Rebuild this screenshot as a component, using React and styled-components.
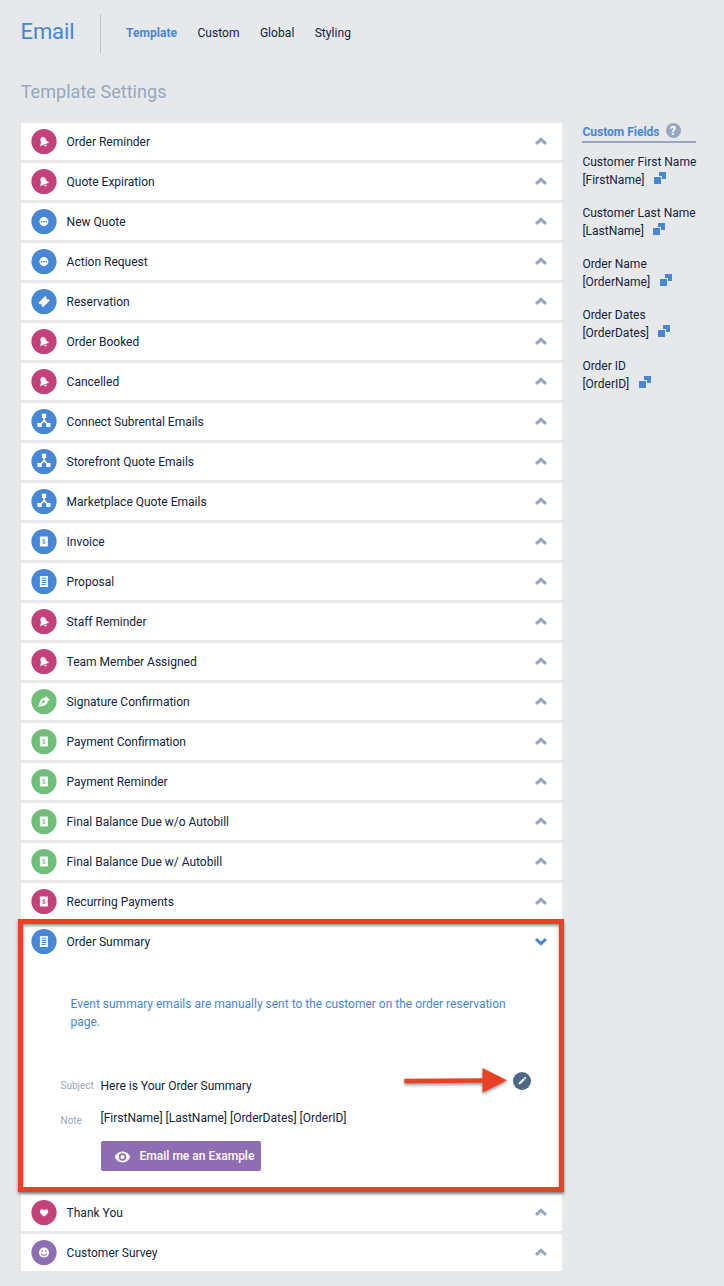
import React from 'react';
import styled, { createGlobalStyle, ThemeProvider } from 'styled-components';

const theme = {
    colors: {
        page: '#e6e8e9',
        text: '#10243e',
        muted: '#94a9c0',
        blue: '#4687d6',
        pink: '#c4417c',
        green: '#6fbf78',
        purple: '#8f6db3',
        slate: '#4c6886',
        marker: '#ea4025'
    }
};

const GlobalStyle = createGlobalStyle`
    * {
        box-sizing: border-box;
    }
    body {
        background: ${theme.colors.page};
        color: ${theme.colors.text};
        font-family: Roboto, 'Liberation Sans', sans-serif;
        font-size: 12px;
        line-height: 18px;
        margin: 0;
    }
    h1, h2, h3, p, ul {
        font-weight: 400;
        margin: 0;
        padding: 0;
    }
    svg {
        display: block;
    }
`;

const Page = styled.div`
    height: 1286px;
    overflow: hidden;
    padding: 14px 0 0 21px;
    width: 724px;
`;

const Header = styled.header`
    display: flex;
    height: 39px;
`;

const Title = styled.h1`
    border-right: 1px solid #b7c4d2;
    color: ${(props) => props.theme.colors.blue};
    font-size: 22px;
    letter-spacing: -0.1px;
    line-height: 36px;
    text-indent: -0.5px;
    width: 80px;
`;

const Nav = styled.nav`
    display: flex;
    gap: 20.3px;
    line-height: 38px;
    margin-left: 25px;
`;

const NavLink = styled.a`
    color: ${(props) =>
        props.$active ? props.theme.colors.blue : props.theme.colors.text};
    font-weight: ${(props) => (props.$active ? 700 : 400)};
    letter-spacing: 0.06px;
`;

const SectionTitle = styled.h2`
    color: ${(props) => props.theme.colors.muted};
    font-size: 18px;
    letter-spacing: 0.04px;
    line-height: 24px;
    margin: 27px 0 19px 0;
    text-indent: -0.3px;
`;

const Columns = styled.div`
    align-items: flex-start;
    display: flex;
    gap: 20.4px;
`;

const List = styled.div`
    display: flex;
    flex-direction: column;
    gap: 3px;
    width: 541px;
`;

const Panel = styled.section`
    background: #fff;
    height: ${(props) => (props.$open ? '268px' : '37px')};
    position: relative;
`;

const PanelHead = styled.div`
    align-items: center;
    display: flex;
    height: 37px;
    padding: 0 14px 0 10px;
`;

const Badge = styled.svg`
    height: 25px;
    margin-right: 9.6px;
    overflow: visible;
    width: 26px;
`;

const PanelName = styled.h3`
    flex: 1;
    font-size: 12px;
`;

const PanelBody = styled.div`
    padding: 35px 30.6px 0 39.5px;
`;

const Description = styled.p`
    color: ${(props) => props.theme.colors.blue};
    margin: 0 0 41px 10px;
    width: 450px;
`;

const Detail = styled.div`
    align-items: flex-start;
    display: flex;
    height: 32px;
    padding-top: 5px;
`;

const DetailLabel = styled.span`
    color: ${(props) => props.theme.colors.muted};
    font-size: 10px;
    padding-top: ${(props) => props.$drop || 0}px;
    width: 40px;
`;

const DetailValue = styled.span`
    flex: 1;
`;

const EditButton = styled.button`
    align-items: center;
    background: ${(props) => props.theme.colors.slate};
    border: 0;
    border-radius: 50%;
    display: flex;
    height: 18px;
    justify-content: center;
    margin-top: -5px;
    padding: 0;
    width: 18px;
`;

const ExampleButton = styled.button`
    align-items: center;
    background: ${(props) => props.theme.colors.purple};
    border: 0;
    border-radius: 2px;
    color: #fff;
    display: flex;
    font: 500 12px/30px Roboto, sans-serif;
    gap: 9px;
    height: 30px;
    margin: 5px 0 0 40.5px;
    padding: 0 0 0 12.6px;
    width: 160px;

    svg {
        margin-top: 2px;
    }
`;

// The highlight lies over the open panel and the edges of its neighbours
const Highlight = styled.div`
    border: 5px solid ${(props) => props.theme.colors.marker};
    box-shadow: 0 2px 3px rgba(0, 0, 0, 0.45),
        inset 0 2px 3px rgba(0, 0, 0, 0.4);
    height: 273px;
    left: -3px;
    pointer-events: none;
    position: absolute;
    top: -4px;
    width: 546px;
    z-index: 1;
`;

const Pointer = styled.svg`
    filter: drop-shadow(0 2px 1.5px rgba(0, 0, 0, 0.4));
    left: 383px;
    overflow: visible;
    position: absolute;
    top: 144px;
`;

const Aside = styled.aside`
    width: 114px;
`;

const AsideTitle = styled.h3`
    align-items: center;
    border-bottom: 2px solid ${(props) => props.theme.colors.muted};
    color: ${(props) => props.theme.colors.blue};
    display: flex;
    font-size: 12px;
    font-weight: 700;
    gap: 6px;
    height: 20px;
    margin-bottom: 10px;
`;

const Help = styled.span`
    background: ${(props) => props.theme.colors.muted};
    border-radius: 50%;
    color: #fff;
    font-size: 12px;
    height: 15px;
    line-height: 16px;
    margin-top: -3px;
    text-align: center;
    width: 15px;
`;

const Field = styled.div`
    margin-bottom: 15px;
    white-space: nowrap;
`;

const FieldTag = styled.div`
    display: flex;
    gap: 9.4px;
`;

const glyphs = {
    bell: (
        <>
            <path
                fill="#fff"
                d="M10.100 8.500q.2-.9 1.100-.5c1.500-.3 2.800.7 3.300 2.200.5 1.500 1.100 2.200 2.900 2.900q.4.4 0 .7l-7.900 3.100q-.6 0-.6-.6c.8-1.700.9-2.800.4-4.300-.5-1.400-.2-2.700.8-3.500Z"
            />
            <path fill="#fff" d="m12.900 16.500 2.200-.9c.5.9.2 1.700-.5 1.900-.7.3-1.400 0-1.700-1Z" />
        </>
    ),
    dots: (tone) => (
        <>
            <circle cx="12.6" cy="12.6" r="4.5" fill="#fff" />
            <g fill={tone}>
                <circle cx="10.2" cy="12.6" r="0.85" />
                <circle cx="12.6" cy="12.6" r="0.85" />
                <circle cx="15" cy="12.6" r="0.85" />
            </g>
        </>
    ),
    ticket: (
        <path
            fill="#fff"
            d="m7.200 13.700 6.700-6.800 1.400 1.400a.9.9 0 0 0 1.700 1.600l1.500 1.500-6.700 6.800-1.700-1.700a.9.9 0 0 0-1.300-1.300Z"
        />
    ),
    network: (
        <>
            <path
                d="M12.800 8v4.200M12.800 11.600 9 15.400M12.800 11.600l3.800 3.800"
                fill="none"
                stroke="#fff"
                strokeWidth="1.5"
            />
            <path
                fill="#fff"
                d="M10.600 4.800h4.300v4.200h-4.300ZM6 13.900h4.300v4H6ZM15 13.900h4.300v4H15Z"
            />
        </>
    ),
    receipt: (tone) => (
        <>
            <path
                fill="#fff"
                d="m8.6 7.2.7.5.8-.5.8.5.8-.5.8.5.8-.5.8.5.8-.5.8.5.8-.5v10.6l-.8-.5-.8.5-.8-.5-.8.5-.8-.5-.8.5-.8-.5-.8.5-.8-.5-.7.5Z"
            />
            <path
                d="M13.9 11c-.3-.5-2.600-.8-2.600.4 0 1.400 2.600.9 2.600 2.200 0 1.100-2.300 1-2.700.3M12.600 10v5"
                fill="none"
                stroke={tone}
                strokeWidth="0.75"
            />
        </>
    ),
    document: (tone) => (
        <>
            <path fill="#fff" d="M8.6 7.1h8v10.900h-8Z" />
            <path
                d="M10.2 9.300h4.900M10.2 11.400h4.900M10.2 13.400h4.900M10.2 15.400h4.200"
                stroke={tone}
                strokeWidth="1.05"
            />
        </>
    ),
    pen: (tone) => (
        <>
            <path
                fill="#fff"
                d="m14.7 7.2 3.6 3.5-1 1-.7-.2c-.3 2.3-1.2 4.2-3.2 4.8l-5.9 1.8-.5-.5 1.8-5.6c.7-2 2.6-2.9 4.8-3.2l-.1-.6Z"
            />
            <path
                d="m7.6 17.2 4-4"
                fill="none"
                stroke={tone}
                strokeWidth="0.8"
            />
            <circle cx="12.2" cy="12.6" r="1.3" fill={tone} />
        </>
    ),
    heart: (
        <path
            fill="#fff"
            d="M12.8 16.500C10.200 14.600 8.600 13.400 8.600 11.400c0-2.300 3-3 4.200-1 1.200-2 4.200-1.300 4.200 1 0 2-1.600 3.200-4.200 5.100Z"
        />
    ),
    smile: (tone) => (
        <>
            <circle cx="12.7" cy="12.6" r="5" fill="#fff" />
            <circle cx="10.9" cy="11.100" r="0.85" fill={tone} />
            <circle cx="14.500" cy="11.100" r="0.85" fill={tone} />
            <path
                d="M9.900 13.700c1.100 2.100 4.500 2.100 5.600 0"
                fill="none"
                stroke={tone}
                strokeWidth="1.1"
            />
        </>
    )
};

const TemplateBadge = ({ name, tone }) => {
    const glyph = glyphs[name];
    return (
        <Badge viewBox="0 0 26 25">
            <circle cx="13" cy="12.5" r="12.6" fill={theme.colors[tone]} />
            <g transform="translate(0.3 0)">
                {typeof glyph === 'function'
                    ? glyph(theme.colors[tone])
                    : glyph}
            </g>
        </Badge>
    );
};

const Chevron = ({ open }) => (
    <svg width="14" height="10" viewBox="0 0 14 10">
        <path
            d={open ? 'm2 2 5 4.600L12 2' : 'm2 6.900 5-4.600 5 4.600'}
            fill="none"
            stroke={open ? theme.colors.blue : theme.colors.muted}
            strokeWidth="3"
        />
    </svg>
);

const CopyIcon = () => (
    <svg width="13" height="13" viewBox="0 0 13 13">
        <path
            fill={theme.colors.blue}
            d="M0 6h7v7H0ZM5 1h7v7H8V5H5Z"
        />
    </svg>
);

const EyeIcon = () => (
    <svg width="17" height="12" viewBox="0 0 17 12">
        <path
            fill="#fff"
            fillRule="evenodd"
            d="M8.5.6c3.6 0 6.4 2.1 7.7 5.4-1.3 3.3-4.1 5.4-7.7 5.4S2.100 9.300.8 6C2.100 2.700 4.900.600 8.500.600Zm0 1.700a3.700 3.700 0 1 0 0 7.400 3.700 3.700 0 0 0 0-7.400Z"
        />
        <circle cx="8.5" cy="6" r="2.1" fill="#fff" />
    </svg>
);

const PencilIcon = () => (
    <svg width="18" height="18" viewBox="0 0 18 18">
        <path
            fill="#fff"
            d="m10.400 6.200 1.500 1.500-4.400 4.400-2 .5.5-2ZM10.900 5.700l.7-.7q.4-.2.7 0l.8.8q.2.4 0 .7l-.7.7Z"
        />
    </svg>
);

const templates = [
    ['Order Reminder', 'bell', 'pink'],
    ['Quote Expiration', 'bell', 'pink'],
    ['New Quote', 'dots', 'blue'],
    ['Action Request', 'dots', 'blue'],
    ['Reservation', 'ticket', 'blue'],
    ['Order Booked', 'bell', 'pink'],
    ['Cancelled', 'bell', 'pink'],
    ['Connect Subrental Emails', 'network', 'blue'],
    ['Storefront Quote Emails', 'network', 'blue'],
    ['Marketplace Quote Emails', 'network', 'blue'],
    ['Invoice', 'receipt', 'blue'],
    ['Proposal', 'document', 'blue'],
    ['Staff Reminder', 'bell', 'pink'],
    ['Team Member Assigned', 'bell', 'pink'],
    ['Signature Confirmation', 'pen', 'green'],
    ['Payment Confirmation', 'receipt', 'green'],
    ['Payment Reminder', 'receipt', 'green'],
    ['Final Balance Due w/o Autobill', 'receipt', 'green'],
    ['Final Balance Due w/ Autobill', 'receipt', 'green'],
    ['Recurring Payments', 'receipt', 'pink'],
    ['Order Summary', 'document', 'blue'],
    ['Thank You', 'heart', 'pink'],
    ['Customer Survey', 'smile', 'purple']
];

const fields = [
    ['Customer First Name', '[FirstName]'],
    ['Customer Last Name', '[LastName]'],
    ['Order Name', '[OrderName]'],
    ['Order Dates', '[OrderDates]'],
    ['Order ID', '[OrderID]']
];

const SummaryBody = () => (
    <PanelBody>
        <Description>
            Event summary emails are manually sent to the customer on the order
            reservation page.
        </Description>
        <Detail>
            <DetailLabel>Subject</DetailLabel>
            <DetailValue>Here is Your Order Summary</DetailValue>
            <EditButton aria-label="Edit">
                <PencilIcon />
            </EditButton>
        </Detail>
        <Detail>
            <DetailLabel $drop={3}>Note</DetailLabel>
            <DetailValue>
                [FirstName] [LastName] [OrderDates] [OrderID]
            </DetailValue>
        </Detail>
        <ExampleButton>
            <EyeIcon />
            Email me an Example
        </ExampleButton>
        <Highlight />
        <Pointer width="104" height="26" viewBox="0 0 104 26">
            <path
                fill={theme.colors.marker}
                d="M.3 11.700 78.500 11.200V1L103 13.300 78.500 25.500V15.800L.3 16.300Z"
            />
        </Pointer>
    </PanelBody>
);

const App = () => (
    <ThemeProvider theme={theme}>
        <GlobalStyle />
        <Page>
            <Header>
                <Title>Email</Title>
                <Nav>
                    <NavLink $active>Template</NavLink>
                    <NavLink>Custom</NavLink>
                    <NavLink>Global</NavLink>
                    <NavLink>Styling</NavLink>
                </Nav>
            </Header>
            <SectionTitle>Template Settings</SectionTitle>
            <Columns>
                <List>
                    {templates.map(([name, icon, tone]) => {
                        const open = name === 'Order Summary';
                        return (
                            <Panel key={name} $open={open}>
                                <PanelHead>
                                    <TemplateBadge name={icon} tone={tone} />
                                    <PanelName>{name}</PanelName>
                                    <Chevron open={open} />
                                </PanelHead>
                                {open && <SummaryBody />}
                            </Panel>
                        );
                    })}
                </List>
                <Aside>
                    <AsideTitle>
                        Custom Fields
                        <Help>?</Help>
                    </AsideTitle>
                    {fields.map(([label, tag]) => (
                        <Field key={tag}>
                            {label}
                            <FieldTag>
                                {tag}
                                <CopyIcon />
                            </FieldTag>
                        </Field>
                    ))}
                </Aside>
            </Columns>
        </Page>
    </ThemeProvider>
);

export default App;
